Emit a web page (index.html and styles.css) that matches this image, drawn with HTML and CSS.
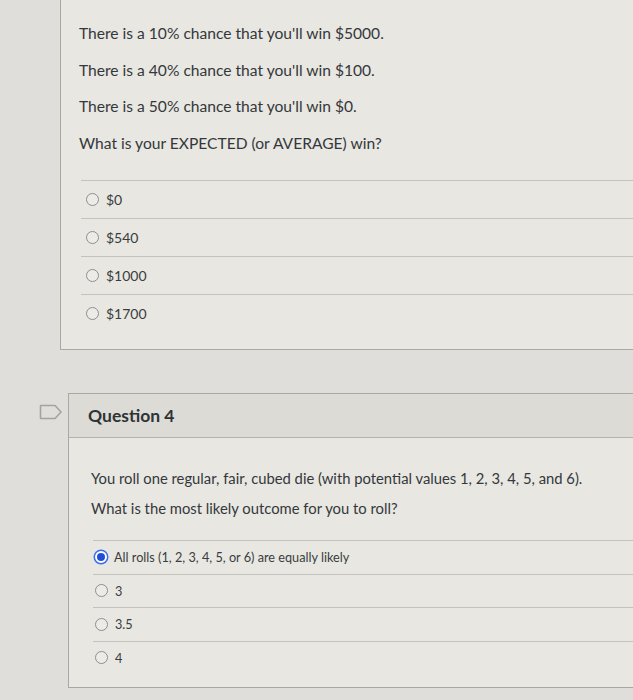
FILE: index.html
```html
<!DOCTYPE html>
<html>
<head>
<meta charset="utf-8">
<link rel="stylesheet" href="styles.css">
</head>
<body>
<div class="page">
  <div class="q-row q-row-first">
    <div class="gutter gutter-first"></div>
    <div class="card card-first">
      <div class="q-text q-text-first">
        <p>There is a 10% chance that you'll win $5000.</p>
        <p>There is a 40% chance that you'll win $100.</p>
        <p>There is a 50% chance that you'll win $0.</p>
        <p>What is your EXPECTED (or AVERAGE) win?</p>
      </div>
      <div class="answers answers-first">
        <div class="answer"><span class="radio"></span><span class="label">$0</span></div>
        <div class="answer"><span class="radio"></span><span class="label">$540</span></div>
        <div class="answer"><span class="radio"></span><span class="label">$1000</span></div>
        <div class="answer"><span class="radio"></span><span class="label">$1700</span></div>
      </div>
    </div>
  </div>

  <div class="q-row q-row-second">
    <div class="gutter gutter-second">
      <svg class="flag" width="24" height="16" viewBox="0 0 24 16">
        <path d="M1.5 1.5 H16 L22 8 L16 14.5 H1.5 Z" fill="none" stroke="#a3a3a1" stroke-width="1.6" stroke-linejoin="round"/>
      </svg>
    </div>
    <div class="card card-second">
      <div class="q-header">Question 4</div>
      <div class="q-text q-text-second">
        <p>You roll one regular, fair, cubed die (with potential values 1, 2, 3, 4, 5, and 6).</p>
        <p>What is the most likely outcome for you to roll?</p>
      </div>
      <div class="answers answers-second">
        <div class="answer"><span class="radio radio-on"></span><span class="label">All rolls (1, 2, 3, 4, 5, or 6) are equally likely</span></div>
        <div class="answer"><span class="radio"></span><span class="label">3</span></div>
        <div class="answer"><span class="radio"></span><span class="label">3.5</span></div>
        <div class="answer"><span class="radio"></span><span class="label">4</span></div>
      </div>
    </div>
  </div>
</div>
</body>
</html>
```

FILE: styles.css
```css
html, body {
  margin: 0;
  padding: 0;
}
body {
  background: #dfdeda;
  font-family: Lato, "Open Sans", sans-serif;
  color: #34383b;
  width: 633px;
  height: 700px;
  overflow: hidden;
}
.page {
  display: flex;
  flex-direction: column;
}
.q-row {
  display: flex;
}
.gutter-first {
  width: 60px;
  flex: none;
}
.gutter-second {
  width: 68px;
  flex: none;
}
.flag {
  display: block;
  margin: 11px 0 0 39px;
}
.card {
  flex: 1;
  background: #e8e7e2;
  border-left: 1px solid #a9a8a3;
  border-bottom: 1px solid #a9a8a3;
}
.card-first {
  height: 349px;
}
.q-row-second {
  margin-top: 43px;
}
.card-second {
  border-top: 1px solid #a9a8a3;
  padding-bottom: 13px;
}
.q-header {
  height: 43px;
  line-height: 43px;
  background: #dcdbd5;
  border-bottom: 1px solid #b3b2ac;
  padding-left: 19px;
  font-size: 17.5px;
  font-weight: 700;
  color: #2e3336;
}
.q-text p {
  margin: 0;
}
.q-text-first {
  padding: 15px 0 0 18px;
  font-size: 15.6px;
  line-height: 36.7px;
}
.q-text-second {
  padding: 25px 0 0 22px;
  font-size: 14.8px;
  line-height: 30px;
}
.answers {
  display: flex;
  flex-direction: column;
}
.answers-first {
  margin: 18px 0 0 20px;
}
.answers-second {
  margin: 17px 0 0 24px;
}
.answer {
  display: flex;
  align-items: center;
  border-top: 1px solid #c3c2bd;
}
.answers-first .answer {
  height: 37px;
  font-size: 14px;
}
.answers-second .answer {
  height: 32.5px;
  font-size: 12.7px;
}
.radio {
  width: 11px;
  height: 11px;
  border: 1px solid #8e8e8c;
  border-radius: 50%;
  background: #ecebe7;
  flex: none;
}
.answers-first .radio {
  margin: 0 7px 0 5px;
}
.answers-second .radio {
  margin: 0 7px 0 2px;
}
.radio-on {
  width: 8px;
  height: 8px;
  background: #1f4fd6;
  border: 2px solid #ffffff;
  box-shadow: 0 0 0 1.5px #3b6df0;
}
.label {
  color: #3a3d40;
}
```
